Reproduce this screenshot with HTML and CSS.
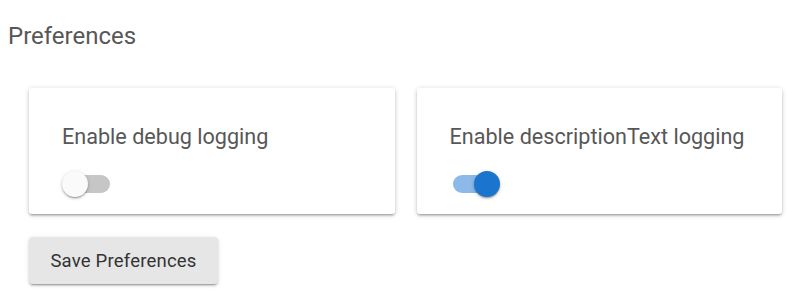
FILE: index.html
```html
<!DOCTYPE html>
<html>
<head>
<meta charset="utf-8">
<link rel="stylesheet" href="styles.css">
</head>
<body>
<div class="page">
  <h1 class="title">Preferences</h1>
  <div class="cards">
    <div class="card">
      <div class="label">Enable debug logging</div>
      <div class="switch">
        <span class="track"></span>
        <span class="thumb"></span>
      </div>
    </div>
    <div class="card">
      <div class="label">Enable descriptionText logging</div>
      <div class="switch on">
        <span class="track"></span>
        <span class="thumb"></span>
      </div>
    </div>
  </div>
  <div class="actions">
    <button class="btn">Save Preferences</button>
  </div>
</div>
</body>
</html>
```
FILE: styles.css
```css
html, body {
  margin: 0;
  padding: 0;
  background: #ffffff;
  font-family: Roboto, "Noto Sans", sans-serif;
}
.page {
  width: 800px;
  height: 308px;
  overflow: hidden;
}
.title {
  margin: 23px 0 0 8px;
  font-size: 24px;
  line-height: 27px;
  font-weight: 400;
  color: #575757;
}
.cards {
  display: grid;
  grid-template-columns: 1fr 1fr;
  gap: 22px;
  margin-top: 38px;
  padding: 0 18px 0 29px;
}
.card {
  height: 126px;
  box-sizing: border-box;
  padding: 36px 20px 0 33px;
  background: #fff;
  border-radius: 3px;
  box-shadow: 0 2px 2px rgba(0,0,0,.14), 0 3px 1px -2px rgba(0,0,0,.12), 0 1px 5px rgba(0,0,0,.2);
}
.label {
  font-size: 21.6px;
  line-height: 25px;
  color: #575757;
}
.switch {
  position: relative;
  width: 52px;
  height: 26px;
  margin: 22px 0 0 0;
}
.track {
  position: absolute;
  left: 4px;
  top: 4px;
  width: 44px;
  height: 18px;
  border-radius: 9px;
  background: #c6c6c6;
}
.thumb {
  position: absolute;
  left: 0;
  top: 0;
  width: 26px;
  height: 26px;
  border-radius: 50%;
  background: #fafafa;
  box-shadow: 0 2px 2px -1px rgba(0,0,0,.25), 0 1px 2px rgba(0,0,0,.16), 0 1px 4px rgba(0,0,0,.14);
}
.switch.on .track {
  left: 3px;
  background: #8cb9e7;
}
.switch.on .thumb {
  left: 24px;
  background: #1b74cd;
}
.actions {
  padding: 23px 0 0 29px;
}
.btn {
  height: 47px;
  width: 189px;
  border: none;
  border-radius: 4px;
  background: #e6e6e6;
  color: #333;
  font-family: Roboto, "Noto Sans", sans-serif;
  font-size: 18.5px;
  letter-spacing: 0.2px;
  padding: 0;
  box-shadow: 0 3px 1px -2px rgba(0,0,0,.2), 0 2px 2px rgba(0,0,0,.14), 0 1px 5px rgba(0,0,0,.12);
}
```
